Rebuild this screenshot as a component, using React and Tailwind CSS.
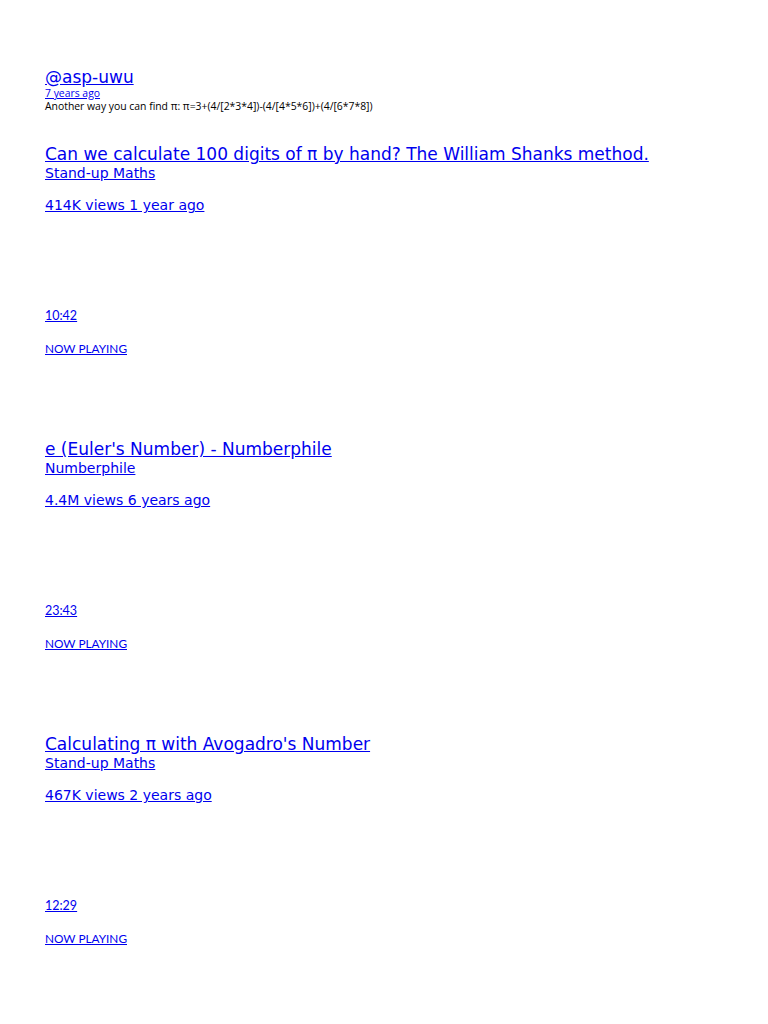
const comment = {
  author: "@asp-uwu",
  when: "7 years ago",
  text: "Another way you can find π: π=3+(4/[2*3*4])-(4/[4*5*6])+(4/[6*7*8])",
};

const videos = [
  {
    title: "Can we calculate 100 digits of π by hand? The William Shanks method.",
    channel: "Stand-up Maths",
    meta: "414K views 1 year ago",
    duration: "10:42",
  },
  {
    title: "e (Euler's Number) - Numberphile",
    channel: "Numberphile",
    meta: "4.4M views 6 years ago",
    duration: "23:43",
  },
  {
    title: "Calculating π with Avogadro's Number",
    channel: "Stand-up Maths",
    meta: "467K views 2 years ago",
    duration: "12:29",
  },
];

const dejavu = "font-['DejaVu_Sans',sans-serif]";
const lato = "font-['Lato',sans-serif]";
const open = "font-['Open_Sans',sans-serif]";

function VideoItem({ video }) {
  return (
    <div className="flex flex-col items-start">
      <a href="#" className={`${dejavu} text-[17px] leading-[20px] text-[#0000ee] underline`}>
        {video.title}
      </a>
      <a href="#" className={`${dejavu} text-[14px] leading-[18px] text-[#0000ee] underline`}>
        {video.channel}
      </a>
      <a href="#" className={`${dejavu} mt-[14px] text-[14px] leading-[18px] text-[#0000ee] underline`}>
        {video.meta}
      </a>
      <a href="#" className={`${lato} mt-[95px] text-[12.5px] leading-[14px] text-[#0000ee] underline`}>
        {video.duration}
      </a>
      <a href="#" className={`${lato} mt-[19px] text-[11.8px] leading-[14px] text-[#0000ee] underline`}>
        NOW PLAYING
      </a>
    </div>
  );
}

export default function App() {
  return (
    <div className="min-h-screen bg-white px-[45px] pt-[67px]">
      <div className="flex flex-col items-start">
        <a href="#" className={`${dejavu} text-[17px] leading-[20px] text-[#0000ee] underline`}>
          {comment.author}
        </a>
        <a href="#" className={`${open} text-[10.4px] leading-[13px] text-[#0000ee] underline`}>
          {comment.when}
        </a>
        <p className={`${open} text-[10.4px] leading-[13px] text-black`}>{comment.text}</p>
      </div>
      <div className="mt-[31px] flex flex-col gap-[83px]">
        {videos.map((v) => (
          <VideoItem key={v.duration} video={v} />
        ))}
      </div>
    </div>
  );
}
